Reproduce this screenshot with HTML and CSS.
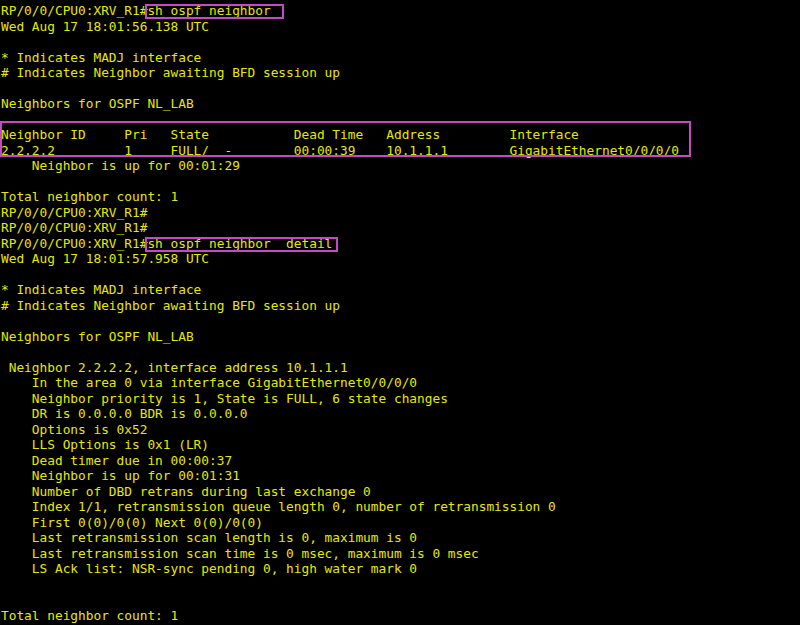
FILE: index.html
```html
<!DOCTYPE html>
<html>
<head>
<meta charset="utf-8">
<link rel="stylesheet" href="styles.css">
</head>
<body>
<div class="term">
<div class="ln">RP/0/0/CPU0:XRV_R1#<span class="hl hl-cmd1">sh ospf neighbor</span></div>
<div class="ln">Wed Aug 17 18:01:56.138 UTC</div>
<div class="ln"> </div>
<div class="ln">* Indicates MADJ interface</div>
<div class="ln"># Indicates Neighbor awaiting BFD session up</div>
<div class="ln"> </div>
<div class="ln">Neighbors for OSPF NL_LAB</div>
<div class="ln"> </div>
<div class="hl-block">
<div class="ln">Neighbor ID     Pri   State           Dead Time   Address         Interface</div>
<div class="ln">2.2.2.2         1     FULL/  -        00:00:39    10.1.1.1        GigabitEthernet0/0/0/0</div>
</div>
<div class="ln">    Neighbor is up for 00:01:29</div>
<div class="ln"> </div>
<div class="ln">Total neighbor count: 1</div>
<div class="ln">RP/0/0/CPU0:XRV_R1#</div>
<div class="ln">RP/0/0/CPU0:XRV_R1#</div>
<div class="ln">RP/0/0/CPU0:XRV_R1#<span class="hl hl-cmd2">sh ospf neighbor  detail</span></div>
<div class="ln">Wed Aug 17 18:01:57.958 UTC</div>
<div class="ln"> </div>
<div class="ln">* Indicates MADJ interface</div>
<div class="ln"># Indicates Neighbor awaiting BFD session up</div>
<div class="ln"> </div>
<div class="ln">Neighbors for OSPF NL_LAB</div>
<div class="ln"> </div>
<div class="ln"> Neighbor 2.2.2.2, interface address 10.1.1.1</div>
<div class="ln">    In the area 0 via interface GigabitEthernet0/0/0/0</div>
<div class="ln">    Neighbor priority is 1, State is FULL, 6 state changes</div>
<div class="ln">    DR is 0.0.0.0 BDR is 0.0.0.0</div>
<div class="ln">    Options is 0x52</div>
<div class="ln">    LLS Options is 0x1 (LR)</div>
<div class="ln">    Dead timer due in 00:00:37</div>
<div class="ln">    Neighbor is up for 00:01:31</div>
<div class="ln">    Number of DBD retrans during last exchange 0</div>
<div class="ln">    Index 1/1, retransmission queue length 0, number of retransmission 0</div>
<div class="ln">    First 0(0)/0(0) Next 0(0)/0(0)</div>
<div class="ln">    Last retransmission scan length is 0, maximum is 0</div>
<div class="ln">    Last retransmission scan time is 0 msec, maximum is 0 msec</div>
<div class="ln">    LS Ack list: NSR-sync pending 0, high water mark 0</div>
<div class="ln"> </div>
<div class="ln"> </div>
<div class="ln">Total neighbor count: 1</div>
</div>
</body>
</html>
```
FILE: styles.css
```css
html, body {
  margin: 0;
  padding: 0;
  background: #000;
  height: 100%;
  overflow: hidden;
}
.term {
  padding: 3px 0 0 1px;
  font-family: "DejaVu Sans Mono", "Liberation Mono", monospace;
  font-size: 12.8px;
  line-height: 15.5px;
  color: #e8e800;
}
.ln {
  white-space: pre;
  height: 15.5px;
}
.hl {
  position: relative;
}
.hl::after {
  content: "";
  position: absolute;
  left: -2px;
  right: 0;
  top: 1px;
  bottom: -1px;
  border: 2px solid #c648c6;
}
.hl-cmd1 {
  padding-right: 13px;
}
.hl-cmd2 {
  padding-right: 6px;
}
.hl-block {
  position: relative;
}
.hl-block::after {
  content: "";
  position: absolute;
  left: -1px;
  width: 691px;
  top: -6px;
  bottom: 1px;
  border: 2px solid #c648c6;
  box-sizing: border-box;
}
```
